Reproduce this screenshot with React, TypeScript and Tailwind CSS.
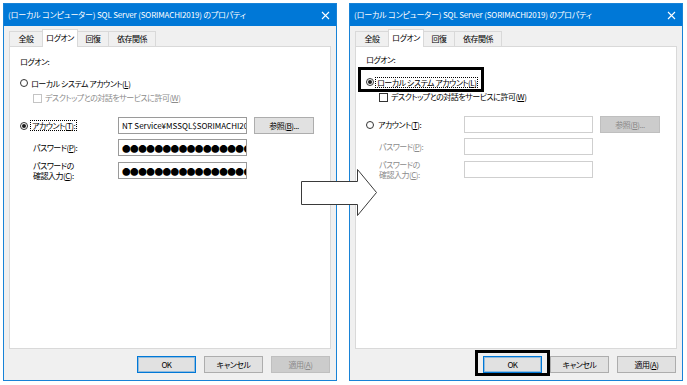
import React from "react";

const F =
  "font-['Noto_Sans_CJK_JP','Noto_Sans',sans-serif] [font-feature-settings:'palt']";

function U({ c }: { c: string }) {
  return <span className="underline underline-offset-[1px]">{c}</span>;
}

function Radio({ checked }: { checked?: boolean }) {
  return (
    <span className="w-[8px] h-[8px] rounded-full border border-[#333333] bg-white flex items-center justify-center shrink-0">
      {checked && <span className="w-[4px] h-[4px] rounded-full bg-[#1a1a1a]" />}
    </span>
  );
}

function Check({ disabled }: { disabled?: boolean }) {
  return (
    <span
      className={
        disabled
          ? "w-[9px] h-[9px] border border-[#c4c4c4] bg-white shrink-0"
          : "w-[9px] h-[9px] border border-[#333333] bg-white shrink-0"
      }
    />
  );
}

function Btn({
  children,
  kind,
  highlight,
}: {
  children: React.ReactNode;
  kind: "default" | "normal" | "disabled";
  highlight?: boolean;
}) {
  const cls =
    kind === "default"
      ? "border-[#0078d7] bg-[#e1e1e1] text-black shadow-[inset_0_0_0_1px_rgba(0,120,215,0.35)]"
      : kind === "normal"
      ? "border-[#adadad] bg-[#e1e1e1] text-black"
      : "border-[#bfbfbf] bg-[#cccccc] text-[#8a8a8a]";
  return (
    <div
      className={`relative w-[59px] h-[17px] border flex items-center justify-center ${cls}`}
    >
      {children}
      {highlight && (
        <div className="absolute -left-[9px] -right-[9px] -top-[7px] -bottom-[4px] border-[3px] border-black" />
      )}
    </div>
  );
}

function TextBox({
  children,
  disabled,
}: {
  children?: React.ReactNode;
  disabled?: boolean;
}) {
  return (
    <div
      className={
        disabled
          ? "w-[129px] h-[17px] border border-[#cfcfcf] bg-white shrink-0"
          : "w-[129px] h-[17px] border border-[#9a9a9a] bg-white shrink-0 overflow-hidden whitespace-nowrap flex items-center pl-[3px]"
      }
    >
      {children}
    </div>
  );
}

function Dots() {
  return (
    <span className="text-[8.6px] leading-[10px] tracking-[-0.5px] text-black">
      {"●●●●●●●●●●●●●●●●●●●●"}
    </span>
  );
}

function Dialog({ right }: { right?: boolean }) {
  const gray = "text-[#8c8c8c]";
  return (
    <div className="w-[334px] h-[378px] border border-[#1883d7] bg-[#f0f0f0] flex flex-col shrink-0">
      {/* title bar */}
      <div className="h-[22px] bg-[#0078d7] text-white flex items-center justify-between pl-[4px] pr-[6px]">
        <span className="text-[8px] leading-[10px] tracking-[-0.15px]">
          (ローカル コンピューター) SQL Server (SORIMACHI2019) のプロパティ
        </span>
        <svg width="9" height="9" viewBox="0 0 9 9">
          <path d="M1 1 L8 8 M8 1 L1 8" stroke="white" strokeWidth="1.1" />
        </svg>
      </div>

      {/* tabs */}
      <div className="flex items-end ml-[5px] mt-[3px] h-[17px] relative z-10">
        <div className="w-[33px] h-[15px] border-l border-t border-[#d9d9d9] bg-[#f0f0f0] flex items-center justify-center">
          全般
        </div>
        <div className="w-[36px] h-[18px] -mb-px border-l border-t border-r border-[#d9d9d9] bg-white flex items-start pt-[3px] justify-center">
          ログオン
        </div>
        <div className="w-[30px] h-[15px] border-t border-[#d9d9d9] bg-[#f0f0f0] flex items-center justify-center">
          回復
        </div>
        <div className="w-[48px] h-[15px] border-l border-t border-r border-[#d9d9d9] bg-[#f0f0f0] flex items-center justify-center">
          依存関係
        </div>
      </div>

      {/* panel */}
      <div
        className={
          right
            ? "mx-[5px] h-[303px] border border-[#d9d9d9] bg-white flex flex-col pl-[10px] pt-[8px] text-black"
            : "mx-[5px] h-[303px] border border-[#d9d9d9] bg-white flex flex-col pl-[10px] pt-[10px] text-black"
        }
      >
        <div className="h-[10px]">ログオン:</div>

        <div
          className={
            right
              ? "relative mt-[11px] h-[12px] flex items-center w-fit"
              : "relative mt-[10px] h-[12px] flex items-center w-fit"
          }
        >
          <Radio checked={right} />
          <span
            className={
              right
                ? "ml-[1px] px-[1px] border border-dotted border-black leading-[9px]"
                : "ml-[1px] px-[1px] border border-transparent leading-[9px]"
            }
          >
            ローカル システム アカウント(<U c="L" />)
          </span>
          {right && (
            <div className="absolute -left-[8px] -top-[9px] w-[126px] h-[25px] border-[3px] border-black" />
          )}
        </div>

        <div className="mt-[4px] h-[10px] flex items-center ml-[13px]">
          <Check disabled={!right} />
          <span className={right ? "ml-[3px]" : `ml-[3px] ${gray}`}>
            デスクトップとの対話をサービスに許可(<U c="W" />)
          </span>
        </div>

        <div className="mt-[14px] h-[17px] flex items-center">
          <div className="w-[98px] flex items-center">
            <Radio checked={!right} />
            <span
              className={
                right
                  ? "ml-[2px] px-[1px] border border-transparent leading-[9px]"
                  : "ml-[2px] px-[1px] border border-dotted border-black leading-[9px]"
              }
            >
              アカウント(<U c="T" />):
            </span>
          </div>
          <TextBox disabled={right}>
            {!right && (
              <span className="tracking-normal">NT Service¥MSSQL$SORIMACHI2019</span>
            )}
          </TextBox>
          <div
            className={
              right
                ? "ml-[7px] w-[60px] h-[17px] border border-[#bfbfbf] bg-[#cccccc] text-[#8a8a8a] flex items-center justify-center"
                : "ml-[7px] w-[60px] h-[17px] border border-[#adadad] bg-[#e1e1e1] flex items-center justify-center"
            }
          >
            参照(<U c="B" />)...
          </div>
        </div>

        <div className="mt-[5px] h-[17px] flex items-center">
          <div className={right ? `w-[98px] pl-[13px] ${gray}` : "w-[98px] pl-[13px]"}>
            パスワード(<U c="P" />):
          </div>
          <TextBox disabled={right}>{!right && <Dots />}</TextBox>
        </div>

        <div className="mt-[6px] h-[17px] flex items-center">
          <div
            className={
              right
                ? `w-[98px] pl-[13px] leading-[10px] mt-[1px] ${gray}`
                : "w-[98px] pl-[13px] leading-[10px] mt-[1px]"
            }
          >
            パスワードの
            <br />
            確認入力(<U c="C" />):
          </div>
          <TextBox disabled={right}>{!right && <Dots />}</TextBox>
        </div>
      </div>

      {/* buttons */}
      <div className="flex justify-end gap-[8px] mr-[6px] mt-[7px]">
        <Btn kind="default" highlight={right}>
          OK
        </Btn>
        <Btn kind="normal">キャンセル</Btn>
        <Btn kind={right ? "normal" : "disabled"}>
          適用(<U c="A" />)
        </Btn>
      </div>
    </div>
  );
}

export default function App() {
  return (
    <div
      className={`relative w-[687px] h-[385px] bg-white overflow-hidden text-[8px] leading-[10px] tracking-[-0.5px] ${F}`}
    >
      <div className="flex gap-[12px] pt-[3px] pl-[3px]">
        <Dialog />
        <Dialog right />
      </div>
      <svg
        className="absolute left-[299px] top-[167px]"
        width="80"
        height="50"
        viewBox="0 0 80 50"
      >
        <polygon
          points="2.5,14.5 58.5,14.5 58.5,2.5 77.5,25.5 58.5,48.5 58.5,37.5 2.5,37.5"
          fill="white"
          stroke="#3a3a3a"
          strokeWidth="1"
        />
      </svg>
    </div>
  );
}
